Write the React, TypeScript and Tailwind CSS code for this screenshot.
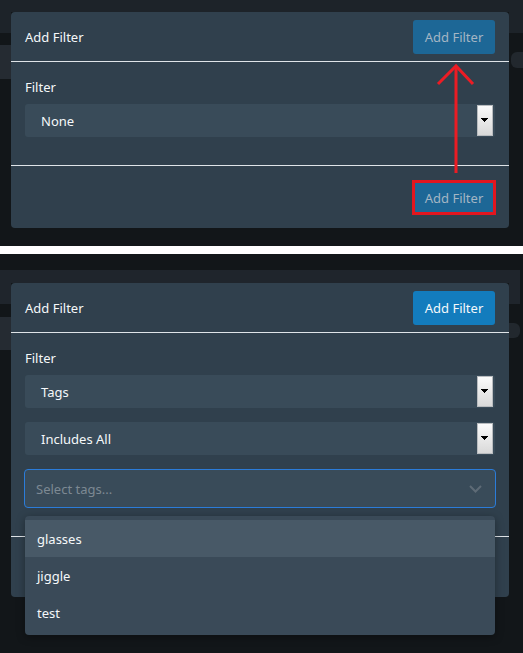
import React from 'react';

const SelectArrow: React.FC = () => (
  <span className="absolute right-[2px] top-[1px] flex h-[31px] w-[16px] items-center justify-center border border-[#b9bcbf] bg-gradient-to-b from-[#fbfbfb] to-[#d9d9d9]">
    <svg width="8" height="5" viewBox="0 0 8 5">
      <path d="M0 0h7v1h-1v1h-1v1h-1v1h-1v-1h-1v-1h-1v-1h-1z" fill="#000" />
    </svg>
  </span>
);

const NativeSelect: React.FC<{ value: string }> = ({ value }) => (
  <div className="relative flex h-[33px] items-center rounded-[3px] bg-[#394b59] pl-[16px] pt-[2px] text-[13px] text-[#f5f8fa]">
    {value}
    <SelectArrow />
  </div>
);

const HeaderButton: React.FC<{ muted?: boolean }> = ({ muted }) => (
  <button
    className={`h-[34px] w-[82px] rounded-[3px] pt-[2px] text-[13px] ${
      muted ? 'bg-[#1d6796] text-[#a4b6c4]' : 'bg-[#137cbd] text-[#f5f8fa]'
    }`}
  >
    Add Filter
  </button>
);

const ModalHeader: React.FC<{ muted?: boolean }> = ({ muted }) => (
  <div className="flex h-[50px] items-center justify-between border-b border-[#dfe4e8] px-[14px]">
    <span className="pt-[2px] text-[13px] text-[#f5f8fa]">Add Filter</span>
    <HeaderButton muted={muted} />
  </div>
);

const FieldLabel: React.FC = () => (
  <div className="h-[21px] text-[13px] leading-[23px] text-[#f5f8fa]">Filter</div>
);

const tags = ['glasses', 'jiggle', 'test'];

export default function App() {
  return (
    <div className="flex h-[653px] w-[523px] flex-col gap-[8px] overflow-hidden bg-white font-['Noto_Sans','Open_Sans',sans-serif]">
      {/* first shot: empty filter */}
      <div className="relative flex h-[246px] flex-col bg-[#121619]">
        <div className="h-[12px] bg-[#1d2329]" />
        <div className="flex items-start">
          <div className="flex w-[11px] flex-col">
            <div className="h-[21px] bg-[#1d2329]" />
            <div className="mt-[12px] h-[34px] bg-[#252b32]" />
          </div>

          <div className="w-[498px] rounded-[4px] bg-[#30404d]">
            <ModalHeader muted />
            <div className="flex flex-col gap-[7px] border-b border-[#dfe4e8] px-[14px] pb-[28px] pt-[14px]">
              <FieldLabel />
              <NativeSelect value="None" />
            </div>
            <div className="flex h-[62px] justify-end pr-[13px] pt-[14px]">
              <button className="h-[35px] w-[84px] pt-[2px] bg-[#1d6796] text-[13px] text-[#a4b6c4] ring-[3px] ring-inset ring-[#e3161f]">
                Add Filter
              </button>
            </div>
          </div>

          <div className="flex flex-1 flex-col">
            <div className="h-[21px] bg-[#1d2329]" />
            <div className="mt-[19px] ml-[2px] h-[16px] rounded-l-md bg-[#22282e]" />
          </div>
        </div>

        <svg className="pointer-events-none absolute inset-0" width="523" height="246" viewBox="0 0 523 246">
          <g stroke="#ec1c24" strokeWidth="3" fill="none">
            <line x1="456" y1="68" x2="456" y2="173" />
            <polyline points="438,84 456,66 473,84" />
          </g>
        </svg>
      </div>

      {/* second shot: tags filter with open menu */}
      <div className="flex flex-1 flex-col bg-[#121619] pt-[16px]">
        <div className="h-[13px] w-[520px] bg-[#1f252c]" />
        <div className="flex items-start">
          <div className="flex w-[11px] flex-col">
            <div className="h-[21px] bg-[#1f252c]" />
            <div className="mt-[13px] h-[33px] bg-[#252b32]" />
          </div>

          <div className="w-[498px] rounded-[4px] bg-[#30404d]">
            <ModalHeader />
            <div className="flex flex-col border-b border-[#dfe4e8] px-[14px] pb-[28px] pt-[14px]">
              <FieldLabel />
              <div className="mt-[7px] flex flex-col gap-[14px]">
                <NativeSelect value="Tags" />
                <NativeSelect value="Includes All" />
                <div className="relative">
                  <div className="-mx-px flex h-[39px] items-center justify-between rounded-[4px] border border-[#2b7cd9] bg-[#394b59] pl-[11px] pr-[13px]">
                    <span className="pt-[2px] text-[13px] text-[#7d8993]">Select tags...</span>
                    <svg width="13" height="8" viewBox="0 0 13 8">
                      <path d="M1 1l5.5 5.5L12 1" stroke="#5e6b76" strokeWidth="2" fill="none" />
                    </svg>
                  </div>
                  <div className="absolute inset-x-0 top-[47px] z-10 flex flex-col rounded-[4px] bg-[#3a4a58] py-[4px] shadow-[0_2px_8px_rgba(0,0,0,0.35)]">
                    {tags.map((tag, i) => (
                      <div
                        key={tag}
                        className={`flex h-[37px] items-center pl-[12px] pt-[2px] text-[13px] text-[#f5f8fa] ${i === 0 ? 'bg-[#485967]' : ''}`}
                      >
                        {tag}
                      </div>
                    ))}
                  </div>
                </div>
              </div>
            </div>
            <div className="flex h-[60px] justify-end pr-[14px] pt-[14px]">
              <HeaderButton />
            </div>
          </div>

          <div className="flex w-[11px] flex-col">
            <div className="h-[21px] bg-[#1f252c]" />
            <div className="mt-[19px] h-[15px] rounded-r-md bg-[#22282e]" />
          </div>
        </div>
      </div>
    </div>
  );
}
